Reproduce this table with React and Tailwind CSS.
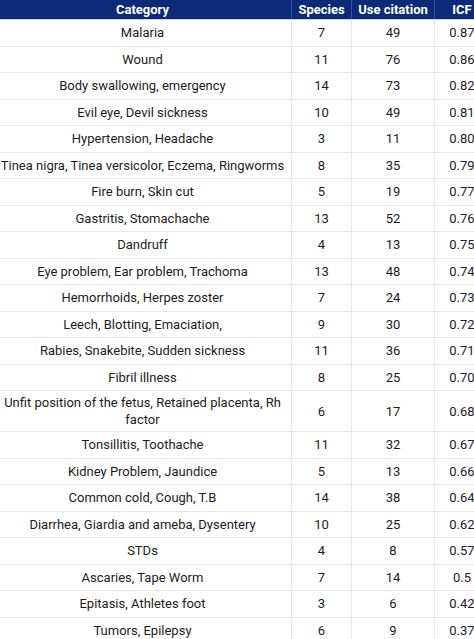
import React from "react";

const rows = [
  ["Malaria", "7", "49", "0.87"],
  ["Wound", "11", "76", "0.86"],
  ["Body swallowing, emergency", "14", "73", "0.82"],
  ["Evil eye, Devil sickness", "10", "49", "0.81"],
  ["Hypertension, Headache", "3", "11", "0.80"],
  ["Tinea nigra, Tinea versicolor, Eczema, Ringworms", "8", "35", "0.79"],
  ["Fire burn, Skin cut", "5", "19", "0.77"],
  ["Gastritis, Stomachache", "13", "52", "0.76"],
  ["Dandruff", "4", "13", "0.75"],
  ["Eye problem, Ear problem, Trachoma", "13", "48", "0.74"],
  ["Hemorrhoids, Herpes zoster", "7", "24", "0.73"],
  ["Leech, Blotting, Emaciation,", "9", "30", "0.72"],
  ["Rabies, Snakebite, Sudden sickness", "11", "36", "0.71"],
  ["Fibril illness", "8", "25", "0.70"],
  ["Unfit position of the fetus, Retained placenta, Rh factor", "6", "17", "0.68", true],
  ["Tonsillitis, Toothache", "11", "32", "0.67"],
  ["Kidney Problem, Jaundice", "5", "13", "0.66"],
  ["Common cold, Cough, T.B", "14", "38", "0.64"],
  ["Diarrhea, Giardia and ameba, Dysentery", "10", "25", "0.62"],
  ["STDs", "4", "8", "0.57"],
  ["Ascaries, Tape Worm", "7", "14", "0.5"],
  ["Epitasis, Athletes foot", "3", "6", "0.42"],
  ["Tumors, Epilepsy", "6", "9", "0.37"],
];

export default function App() {
  return (
    <div
      className="w-[474px] h-[639px] overflow-hidden bg-white"
      style={{ fontFamily: "Roboto, 'Liberation Sans', sans-serif" }}
    >
      <div className="w-[495px] ml-[-6px]">
        <div className="grid grid-cols-[298px_60px_83px_54px] h-[20px] bg-[#0b2a78] border-b border-[#c8cfe3] text-white font-bold text-[13px] leading-[19px]">
          <div className="text-center border-r border-[#3552a0]">Category</div>
          <div className="text-center border-r border-[#3552a0]">Species</div>
          <div className="text-center border-r border-[#3552a0]">Use citation</div>
          <div className="text-center">ICF</div>
        </div>
        {rows.map((r, i) => (
          <div
            key={i}
            className={
              "grid grid-cols-[298px_60px_83px_54px] border-b border-[#e6e6e6] text-[13px] text-[#1c1c1c] " +
              (r[4] ? "h-[41px] leading-[17px]" : "h-[26.5px] leading-[17px]")
            }
          >
            <div className="flex items-center justify-center text-center border-r border-[#e6e6e6] px-[4px] whitespace-nowrap">
              {r[4] ? (
                <span className="whitespace-normal">
                  Unfit position of the fetus, Retained placenta, Rh
                  <br />
                  factor
                </span>
              ) : (
                r[0]
              )}
            </div>
            <div className="flex items-center justify-center border-r border-[#e6e6e6]">{r[1]}</div>
            <div className="flex items-center justify-center border-r border-[#e6e6e6]">{r[2]}</div>
            <div className="flex items-center justify-center">{r[3]}</div>
          </div>
        ))}
      </div>
    </div>
  );
}
